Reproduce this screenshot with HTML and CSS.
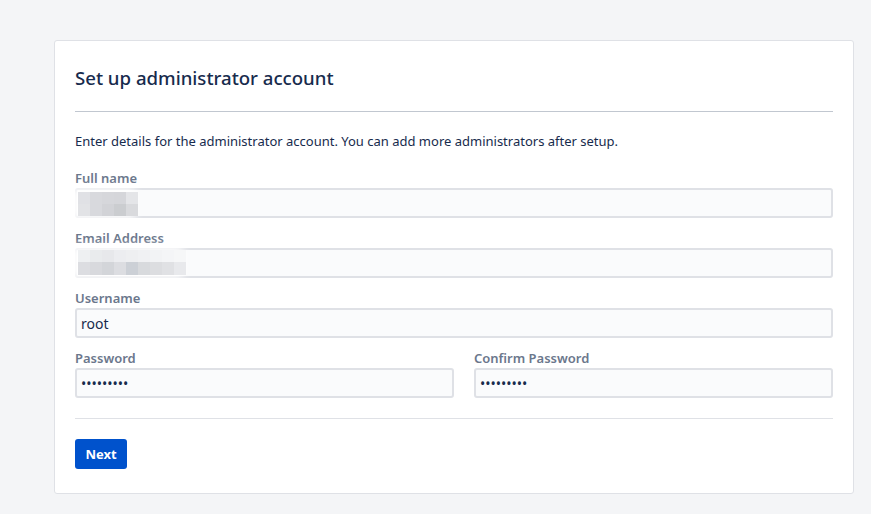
FILE: index.html
```html
<!DOCTYPE html>
<html lang="en">
<head>
<meta charset="utf-8">
<title>Set up administrator account</title>
<link rel="stylesheet" href="styles.css">
</head>
<body>
<main class="page">
  <section class="card">
    <h1 class="title">Set up administrator account</h1>
    <p class="intro">Enter details for the administrator account. You can add more administrators after setup.</p>
    <form class="form">
      <div class="field">
        <label class="label">Full name</label>
        <div class="input-wrap">
          <input class="input" type="text" value="">
          <div class="redact redact-name">
            <span style="background:#e0e1e5"></span><span style="background:#d8d9dd"></span><span style="background:#d6d7db"></span><span style="background:#d5d6da"></span><span style="background:#e4e5e8"></span>
            <span style="background:#e2e3e6"></span><span style="background:#d8d9dd"></span><span style="background:#d2d3d7"></span><span style="background:#cbcdd0"></span><span style="background:#d9dadd"></span>
          </div>
        </div>
      </div>
      <div class="field">
        <label class="label">Email Address</label>
        <div class="input-wrap">
          <input class="input" type="text" value="">
          <div class="redact redact-email">
            <span style="background:#eef0f2"></span><span style="background:#e9ebed"></span><span style="background:#e7e8eb"></span><span style="background:#ecedf0"></span><span style="background:#eeeff1"></span><span style="background:#f0f1f3"></span><span style="background:#f2f3f5"></span><span style="background:#f4f5f7"></span><span style="background:#f6f7f8"></span>
            <span style="background:#dcdde1"></span><span style="background:#d8d9dd"></span><span style="background:#d3d5d9"></span><span style="background:#dcdde1"></span><span style="background:#ccd0d6"></span><span style="background:#d8dadd"></span><span style="background:#dcdde0"></span><span style="background:#e0e1e4"></span><span style="background:#e8e9ec"></span>
          </div>
        </div>
      </div>
      <div class="field">
        <label class="label">Username</label>
        <input class="input" type="text" value="root">
      </div>
      <div class="row">
        <div class="field">
          <label class="label">Password</label>
          <input class="input" type="password" value="123456789">
        </div>
        <div class="field">
          <label class="label">Confirm Password</label>
          <input class="input" type="password" value="123456789">
        </div>
      </div>
      <div class="actions">
        <button class="btn" type="button">Next</button>
      </div>
    </form>
  </section>
</main>
</body>
</html>
```

FILE: styles.css
```css
* { box-sizing: border-box; }
html, body { margin: 0; padding: 0; }
body {
  background: #f4f5f7;
  font-family: "Noto Sans", "Open Sans", "Liberation Sans", sans-serif;
  color: #172b4d;
  width: 871px;
  height: 514px;
  overflow: hidden;
}
.page {
  padding: 40px 17px 0 54px;
}
.card {
  width: 800px;
  background: #fff;
  border: 1px solid #dfe1e6;
  border-radius: 3px;
  padding: 23px 20px 24px 20px;
}
.title {
  margin: 0;
  font-size: 18.6px;
  font-weight: 500;
  line-height: 28px;
  color: #172b4d;
  padding-bottom: 19px;
  border-bottom: 1px solid #c1c7d0;
}
.intro {
  margin: 19px 0 0 0;
  font-size: 13px;
  line-height: 20px;
  color: #172b4d;
}
.form {
  display: flex;
  flex-direction: column;
  margin-top: 17px;
}
.field {
  display: flex;
  flex-direction: column;
  margin-bottom: 10px;
}
.row .field { margin-bottom: 0; }
.label {
  font-size: 13px;
  font-weight: 600;
  line-height: 20px;
  color: #6b778c;
}
.input-wrap { position: relative; }
.input {
  width: 100%;
  height: 30px;
  border: 2px solid #dfe1e6;
  border-radius: 3px;
  background: #fafbfc;
  padding: 0 4px;
  font-family: inherit;
  font-size: 14px;
  color: #172b4d;
  outline: none;
}
.row {
  display: grid;
  grid-template-columns: 379px 359px;
  column-gap: 20px;
}
.actions {
  margin-top: 20px;
  border-top: 1px solid #dfe1e6;
  padding-top: 20px;
}
.btn {
  background: #0052cc;
  color: #fff;
  border: none;
  border-radius: 3px;
  height: 30px;
  width: 52px;
  padding: 0;
  font-family: inherit;
  font-size: 13px;
  font-weight: 700;
  cursor: pointer;
}
.redact {
  position: absolute;
  display: grid;
  grid-auto-rows: 12px;
  pointer-events: none;
  filter: blur(0.4px);
  box-shadow: -6px 0 8px 4px rgba(255,255,255,0.9);
  border-radius: 2px;
}
.redact-name {
  left: 3px;
  top: 4px;
  grid-template-columns: repeat(5, 12px);
}
.redact-email {
  left: 3px;
  top: 2px;
  grid-template-columns: repeat(9, 12px);
  grid-auto-rows: 12px 13px;
}
```
